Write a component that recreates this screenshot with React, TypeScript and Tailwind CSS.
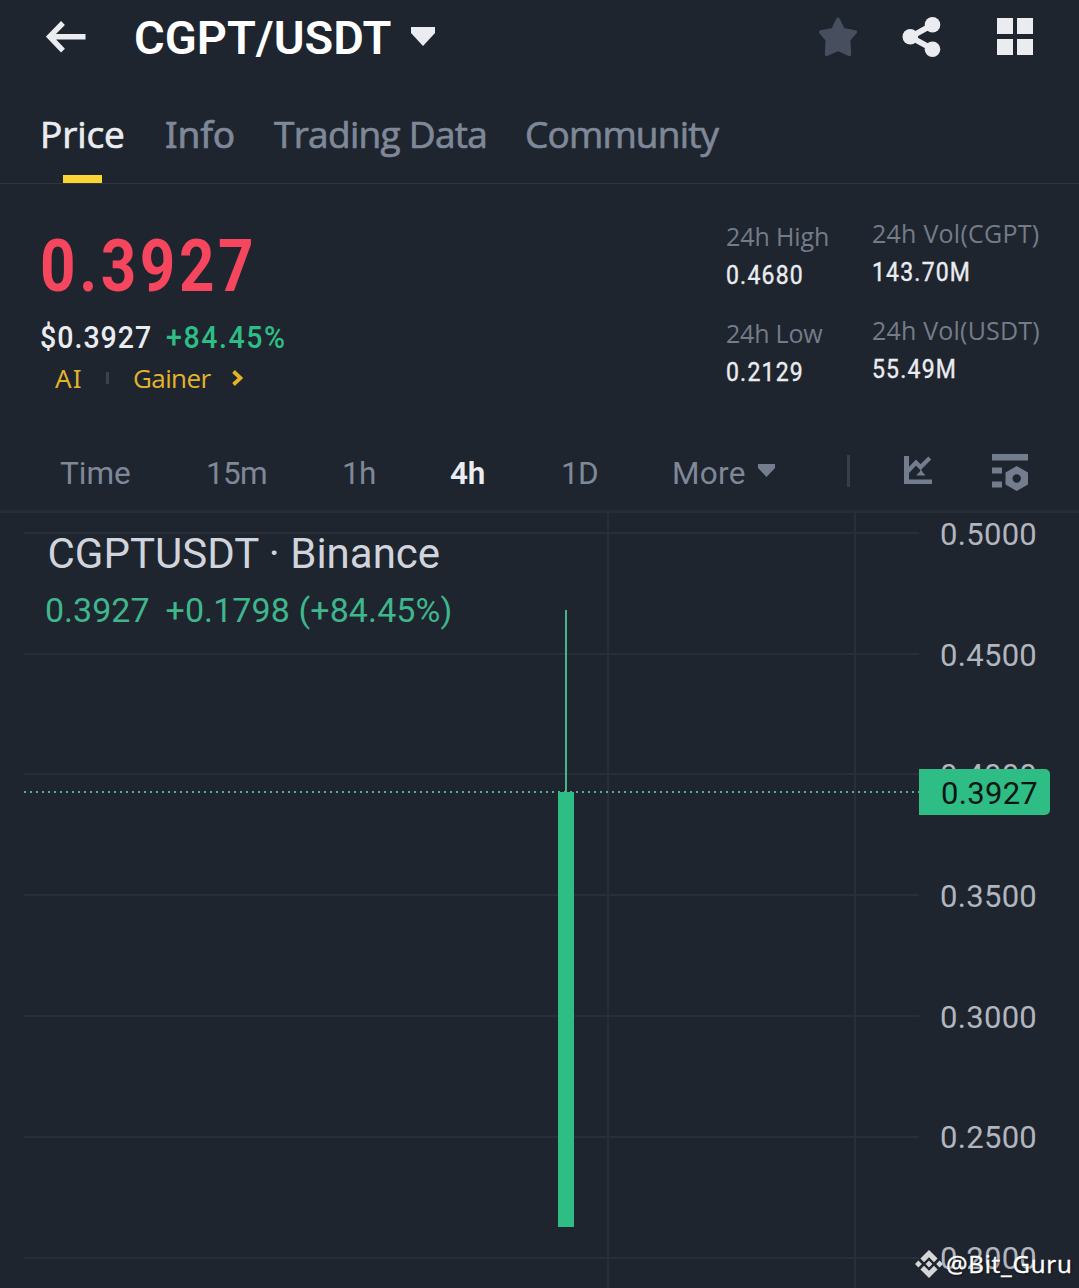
import React from 'react';

const tabs = [
  { label: 'Price', cls: "font-['Open_Sans',sans-serif] tracking-[-0.1px] text-[#eaecef]" },
  { label: 'Info', cls: "font-['Noto_Sans',sans-serif] tracking-[-0.1px] text-[#7f8898]" },
  { label: 'Trading Data', cls: "font-['Open_Sans',sans-serif] tracking-[-0.7px] text-[#7f8898]" },
  { label: 'Community', cls: "font-['Open_Sans',sans-serif] tracking-[-0.8px] text-[#7f8898]" },
];

const axis = ['0.5000', '0.4500', '0.4000', '0.3500', '0.3000', '0.2500', '0.2000'];

function Stat({ label, value, cls }: { label: string; value: string; cls: string }) {
  return (
    <div className="h-[96.5px] whitespace-nowrap">
      <div className={"font-['Open_Sans',sans-serif] text-[25px] leading-[36px] text-[#747c89] " + cls}>{label}</div>
      <div className="mt-[4px] origin-left scale-x-[0.92] text-[25px] leading-[36px] tracking-[1.3px] text-[#eaecef] [-webkit-text-stroke:0.4px]">
        {value}
      </div>
    </div>
  );
}

function Header() {
  return (
    <header className="flex h-[74px] items-center pl-[46px] pr-[46px]">
      <svg className="h-8 w-10 shrink-0" viewBox="0 0 40 32" fill="none" stroke="#eaecef" strokeWidth="5.4">
        <path d="M39.5 15.7H4M17 2L3.6 15.7L17 29.6" />
      </svg>
      <h1 className="ml-[48px] whitespace-nowrap pt-px text-[47px] font-semibold leading-[56px] text-white">CGPT/USDT</h1>
      <svg className="mb-[2px] ml-[19.5px] h-[19px] w-6" viewBox="0 0 24 19" fill="#eaecef">
        <path d="M0 0H24V6L12 19L0 6Z" />
      </svg>
      <div className="ml-auto flex items-center pb-px">
        <svg className="h-10 w-10" viewBox="0 0 40 40" fill="#474f5e" stroke="#474f5e" strokeWidth="3.6" strokeLinejoin="round">
          <path d="M20 2.3L25 12.8L37.2 15L30.6 22.8L31.4 37.4L20 32L8.6 37.4L9.4 22.8L2.8 15L15 12.8Z" />
        </svg>
        <svg className="ml-[44px] h-10 w-[39px]" viewBox="0 0 39 40" fill="#eaecef">
          <path d="M30.5 7.8L8.5 20L30.5 32" fill="none" stroke="#eaecef" strokeWidth="5.8" />
          <circle cx="8.3" cy="19.8" r="7.8" />
          <circle cx="30.5" cy="7.8" r="7.8" />
          <circle cx="30.5" cy="32.2" r="7.8" />
        </svg>
        <div className="ml-[56px] grid grid-cols-2 gap-[4.5px]">
          <i className="size-[15.8px] bg-[#eaecef]" />
          <i className="size-[15.8px] bg-[#eaecef]" />
          <i className="size-[15.8px] bg-[#eaecef]" />
          <i className="size-[15.8px] bg-[#eaecef]" />
        </div>
      </div>
    </header>
  );
}

export default function App() {
  return (
    <div className="h-[1288px] w-[1079px] overflow-hidden bg-[#1e252f] font-['Roboto',sans-serif]">
      <Header />
      <nav className="grid h-[110px] grid-cols-[125px_109px_251px_auto] border-b border-[#30373f] pl-[40px]">
        {tabs.map((t, i) => (
          <div key={t.label} className="flex flex-col">
            <span className={'mt-[35px] h-[66px] whitespace-nowrap text-[37px] leading-[50px] [-webkit-text-stroke:0.7px] ' + t.cls}>{t.label}</span>
            {i === 0 && <span className="ml-[23px] h-2 w-[39px] bg-[#fcd535]" />}
          </div>
        ))}
      </nav>

      <section className="flex h-[250px]">
        <div className="w-[687px] pl-[40px] pt-[42px]">
          <div className="origin-left scale-x-[0.86] text-[72px] font-bold leading-[82px] tracking-[4.2px] text-[#f6465d]">0.3927</div>
          <div className="mt-[11px] flex h-[38px] w-[300px] origin-left scale-x-[0.92] gap-[14px] whitespace-nowrap text-[31px] font-medium leading-[38px]">
            <span className="w-[123px] tracking-[1.1px] text-[#eaecef]">$0.3927</span>
            <span className="tracking-[1.7px] text-[#2ebd85]">+84.45%</span>
          </div>
          <div className="mt-[4px] flex h-[34px] items-center text-[26px] leading-[34px] text-[#e3b32a]">
            <span className="ml-[15px] w-[51px] font-['Noto_Sans',sans-serif] tracking-[1.2px]">AI</span>
            <span className="mb-px h-3 w-[3px] bg-[#3a424e]" />
            <span className="ml-6 w-[99px] font-['Open_Sans',sans-serif] tracking-[-0.6px]">Gainer</span>
            <svg className="h-4 w-[11px]" viewBox="0 0 11 16" fill="none" stroke="#e3b32a" strokeWidth="3.8">
              <path d="M1.5 1.5L8.5 8L1.5 14.5" />
            </svg>
          </div>
        </div>
        <div className="w-[145px] pl-[39px] pt-[34px]">
          <Stat label="24h High" value="0.4680" cls="tracking-[-0.1px]" />
          <Stat label="24h Low" value="0.2129" cls="tracking-[-0.2px]" />
        </div>
        <div className="pl-[40px] pt-[31px]">
          <Stat label="24h Vol(CGPT)" value="143.70M" cls="tracking-[0.25px]" />
          <Stat label="24h Vol(USDT)" value="55.49M" cls="tracking-[0.2px]" />
        </div>
      </section>

      <div className="flex h-[79px] items-center border-b-[3px] border-[#262d37] text-[31.5px] leading-[40px] text-[#7f8898]">
        <div className="flex pt-[3px]">
          <span className="ml-[60px] w-[146px]">Time</span>
          <span className="w-[136px] tracking-[-0.7px]">15m</span>
          <span className="w-[108px] tracking-[-0.8px]">1h</span>
          <span className="w-[111px] font-semibold tracking-[-0.3px] text-[#eaecef]">4h</span>
          <span className="w-[111px] tracking-[-0.6px]">1D</span>
          <span className="w-[85.5px] tracking-[0.3px]">More</span>
        </div>
        <svg className="mb-1 h-[13px] w-[17px]" viewBox="0 0 17 13" fill="#747d8e">
          <path d="M0 0H17V4L8.5 13L0 4Z" />
        </svg>
        <span className="mb-[2px] ml-[72px] h-8 w-[3px] bg-[#373e4a]" />
        <svg className="mb-[4px] ml-[54px] h-7 w-7" viewBox="0 0 28 28" fill="#747d8e">
          <path d="M0 0H5V23.4H28V28.4H0Z" />
          <path d="M3.5 15.5L12 6.5L16.5 11.2L25.8 2" fill="none" stroke="#747d8e" strokeWidth="4.2" />
          <path d="M17 13L18.5 16L21.5 19.5H12L15.5 16Z" />
        </svg>
        <svg className="ml-[60px] h-[37px] w-9" viewBox="0 0 36 37" fill="#747d8e">
          <path d="M0 0H36V6.5H0ZM0 13.5H10V19.5H0ZM0 27.5H10V33.5H0Z" />
          <path fillRule="evenodd" d="M24.7 12L36 18.5V30.5L24.7 37L13.5 30.5V18.5ZM24.7 20.3A4.2 4.2 0 1 0 24.7 28.7A4.2 4.2 0 1 0 24.7 20.3Z" />
        </svg>
      </div>

      <main className="relative flex h-[775px]">
        <svg className="h-[775px] w-[919px] shrink-0" viewBox="0 513 919 775" shapeRendering="crispEdges">
          <path
            d="M24 533H919M24 654H919M24 774H919M24 895H919M24 1016H919M24 1137H919M24 1258H919M608 513V1288M855 513V1288"
            stroke="#292f39"
            strokeWidth="2"
          />
          <path d="M24 792H919" stroke="#4fb295" strokeWidth="2" strokeDasharray="2 4" />
          <rect x="565" y="610" width="2" height="182" fill="#45b68c" />
          <rect x="558" y="792" width="16" height="435" fill="#2ebd85" />
        </svg>
        <div className="pl-[21px] pt-[2px] text-[31px] leading-[40px] tracking-[0.3px] text-[#b2b5be]">
          {axis.map((v) => (
            <div key={v} className="h-[120.7px]">{v}</div>
          ))}
        </div>
        <div className="absolute left-[45px] top-[15px] whitespace-nowrap">
          <div className="pl-[2.5px] text-[42px] leading-[52px] text-[#d1d4dc]">CGPTUSDT · Binance</div>
          <div className="mt-[10px] flex text-[34px] leading-[40px] text-[#3fb68b]">
            <span className="w-[120.5px]">0.3927</span>
            <span className="tracking-[0.1px]">+0.1798 (+84.45%)</span>
          </div>
        </div>
        <div className="absolute left-[919px] top-[256px] h-[46px] w-[131px] rounded-r-[5px] bg-[#2ebd85] pl-[22px] pt-[2px] text-[31px] leading-[46px] tracking-[0.3px] text-[#0c1513]">
          0.3927
        </div>
        <div className="absolute left-[915px] top-[733px] flex items-center font-['Noto_Sans',sans-serif] text-[24px] leading-[36px] tracking-[0.75px] text-white [-webkit-text-stroke:0.3px] [text-shadow:1px_1px_2px_rgba(0,0,0,0.6)]">
          <svg className="mr-[3px] h-7 w-7" viewBox="0 0 28 28" fill="#d5d6d8">
            <path d="M14 0L22.6 8.6L19 12.2L14 7.2L9 12.2L5.4 8.6ZM14 28L5.4 19.4L9 15.8L14 20.8L19 15.8L22.6 19.4ZM14 10.6L17.4 14L14 17.4L10.6 14ZM3.4 10.6L6.8 14L3.4 17.4L0 14ZM24.6 10.6L28 14L24.6 17.4L21.2 14Z" />
          </svg>
          <span>@Bit_Guru</span>
        </div>
      </main>
    </div>
  );
}
